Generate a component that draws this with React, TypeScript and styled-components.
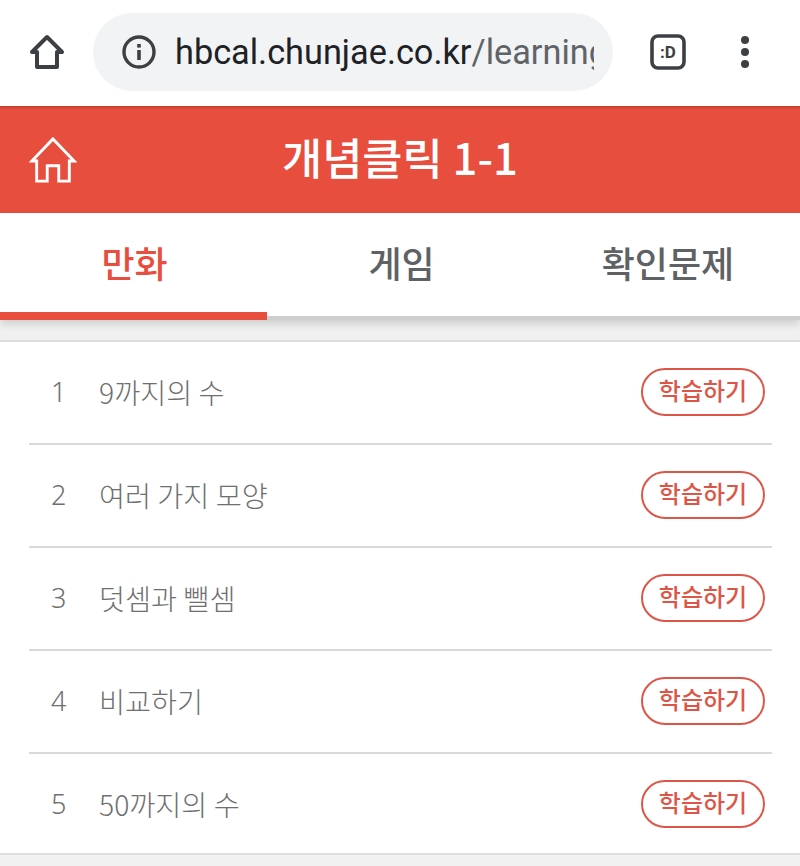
import React from "react";
import styled, { createGlobalStyle } from "styled-components";

const GlobalStyle = createGlobalStyle`
  html, body {
    margin: 0;
    padding: 0;
    background: #f0f0f0;
  }
  body {
    font-family: "Noto Sans CJK KR", "Noto Sans", sans-serif;
  }
`;

const Page = styled.div`
  width: 800px;
  height: 866px;
  overflow: hidden;
  background: #f0f0f0;
`;

const BrowserBar = styled.div`
  height: 106px;
  background: #fff;
  display: flex;
  align-items: center;
  padding: 0 0 3px 0;
  box-sizing: border-box;
`;

const BrowserIcon = styled.div<{ $width: number }>`
  width: ${(p) => p.$width}px;
  flex: none;
  display: flex;
  align-items: center;
  justify-content: center;
`;

const Omnibox = styled.div`
  width: 520px;
  height: 78px;
  border-radius: 39px;
  background: #f1f3f4;
  display: flex;
  align-items: center;
  padding: 0 19px 0 29px;
  box-sizing: border-box;
  flex: none;
`;

const Url = styled.div`
  margin-left: 19px;
  font-family: Roboto, "Liberation Sans", sans-serif;
  font-size: 34.3px;
  color: #202124;
  white-space: nowrap;
  overflow: hidden;
  flex: 1;
  span {
    color: #5f6368;
  }
`;

const Header = styled.header`
  height: 107px;
  background: #e84e3e;
  box-shadow: inset 0 3px 2px -1px rgba(150, 40, 30, 0.4);
  box-sizing: border-box;
  display: flex;
  align-items: center;
  padding-left: 29px;
  position: relative;
`;

const Title = styled.h1`
  position: absolute;
  left: 0;
  right: 0;
  margin: 0;
  text-align: center;
  color: #fff;
  font-size: 43.7px;
  font-weight: 500;
  line-height: 1;
  top: 29px;
`;

const Tabs = styled.nav`
  height: 107px;
  background: #fff;
  display: grid;
  grid-template-columns: 267px 267px 266px;
  box-shadow: 0 4px 8px rgba(0, 0, 0, 0.14);
  position: relative;
`;

const Tab = styled.div<{ $active?: boolean }>`
  display: flex;
  align-items: flex-start;
  justify-content: center;
  padding: 28px 0 0 2px;
  box-sizing: border-box;
  font-size: 36px;
  font-weight: 500;
  line-height: 1.2;
  color: ${(p) => (p.$active ? "#e84e3e" : "#5f6265")};
  border-bottom: ${(p) => (p.$active ? "8px solid #e84e3e" : "4px solid #cfcfcf")};
`;

const List = styled.ul`
  list-style: none;
  margin: 20px 0 0;
  padding: 0 28px 0 29px;
  background: #fff;
  border-top: 2px solid #dedede;
  height: 515px;
  box-sizing: border-box;
  border-bottom: 2px solid #dedede;
`;

const Row = styled.li`
  height: 103px;
  box-sizing: border-box;
  border-bottom: 2px solid #d9d9d9;
  display: flex;
  align-items: center;
  padding-bottom: 2px;
  &:last-child {
    border-bottom: none;
    padding-bottom: 4px;
  }
`;

const RowNumber = styled.span`
  width: 70px;
  padding-left: 22px;
  box-sizing: border-box;
  flex: none;
  font-family: "Noto Sans", sans-serif;
  font-weight: 300;
  font-size: 27px;
  color: #6f6f6f;
`;

const RowTitle = styled.span`
  flex: 1;
  font-size: 28.3px;
  font-weight: 300;
  color: #6f6f6f;
`;

const StudyButton = styled.button`
  width: 124px;
  height: 48px;
  margin-right: 7px;
  border: 2px solid #dd5546;
  border-radius: 24px;
  background: #fff;
  color: #dd5546;
  font-family: inherit;
  font-size: 24px;
  font-weight: 500;
  padding: 0 0 3px;
  line-height: 1;
`;

const MoreIcon = styled.svg`
  flex: none;
  margin-left: 17px;
`;

const chapters = ["9까지의 수", "여러 가지 모양", "덧셈과 뺄셈", "비교하기", "50까지의 수"];

export default function App() {
  return (
    <Page>
      <GlobalStyle />
      <BrowserBar>
        <BrowserIcon $width={93}>
          <svg width="36" height="36" viewBox="0 0 36 36" fill="none" stroke="#3c4043" strokeWidth="4" strokeLinejoin="round">
            <path d="M18 3 L33 18 H28 V33 H8 V18 H3 Z" />
          </svg>
        </BrowserIcon>
        <Omnibox>
          <svg width="34" height="34" viewBox="0 0 34 34" style={{ flex: "none" }}>
            <circle cx="17" cy="17" r="15" fill="none" stroke="#3c4043" strokeWidth="3.4" />
            <rect x="15.2" y="15" width="3.6" height="10" fill="#3c4043" />
            <rect x="15.2" y="9" width="3.6" height="3.6" fill="#3c4043" />
          </svg>
          <Url>
            hbcal.chunjae.co.kr<span>/learning</span>
          </Url>
        </Omnibox>
        <BrowserIcon $width={109}>
          <svg width="36" height="36" viewBox="0 0 36 36">
            <rect x="2" y="2" width="32" height="32" rx="6" fill="none" stroke="#3c4043" strokeWidth="3.6" />
            <text x="18" y="24" textAnchor="middle" fontFamily="Roboto, sans-serif" fontSize="17" fontWeight="700" fill="#3c4043">:D</text>
          </svg>
        </BrowserIcon>
        <MoreIcon width="12" height="34" viewBox="0 0 12 34">
          <circle cx="6" cy="5" r="4" fill="#3c4043" />
          <circle cx="6" cy="17" r="4" fill="#3c4043" />
          <circle cx="6" cy="29" r="4" fill="#3c4043" />
        </MoreIcon>
      </BrowserBar>
      <Header>
        <svg width="48" height="48" viewBox="0 0 50 50" fill="none" stroke="#fff" strokeWidth="3" strokeLinejoin="miter">
          <path d="M25 3 L47 26 H42 V47 H31 V31 H19 V47 H8 V26 H3 Z" />
        </svg>
        <Title>개념클릭 1-1</Title>
      </Header>
      <Tabs>
        <Tab $active>만화</Tab>
        <Tab>게임</Tab>
        <Tab>확인문제</Tab>
      </Tabs>
      <List>
        {chapters.map((chapter, i) => (
          <Row key={chapter}>
            <RowNumber>{i + 1}</RowNumber>
            <RowTitle>{chapter}</RowTitle>
            <StudyButton>학습하기</StudyButton>
          </Row>
        ))}
      </List>
    </Page>
  );
}
